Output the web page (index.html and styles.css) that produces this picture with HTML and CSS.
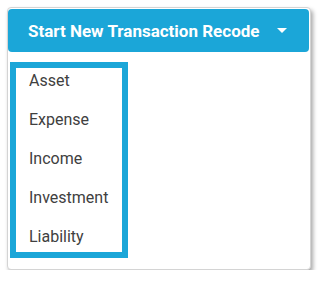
FILE: index.html
```html
<!DOCTYPE html>
<html lang="en">
<head>
    <meta charset="UTF-8">
    <title>Transaction Recode</title>
    <link rel="stylesheet" href="styles.css">
</head>
<body>
    <div class="dropdown-card">
        <button class="dropdown-toggle" type="button">
            Start New Transaction Recode
            <span class="caret"></span>
        </button>
        <ul class="dropdown-menu">
            <li>Asset</li>
            <li>Expense</li>
            <li>Income</li>
            <li>Investment</li>
            <li>Liability</li>
        </ul>
        <!-- highlight box drawn over the menu -->
        <div class="highlight"></div>
    </div>
</body>
</html>
```

FILE: styles.css
```css
:root {
    --brand-blue: #1ba6d8;
    --text-color: #404040;
    --border-color: #d4d4d4;
}

body {
    margin: 0;
    background-color: white;
    font-family: Roboto, 'Liberation Sans', sans-serif;
}

.dropdown-card {
    position: relative;
    box-sizing: border-box;
    width: 304px;
    height: 263px;
    margin: 7px 0 0 7px;
    padding-top: 1px;
    background-color: white;
    border: 1px solid var(--border-color);
    border-radius: 4px;
    box-shadow: 2px 3px 4px rgba(0, 0, 0, 0.35);
}

.dropdown-toggle {
    display: flex;
    align-items: center;
    box-sizing: border-box;
    width: 301px;
    height: 43px;
    margin: 0;
    padding: 0 0 0 20px;
    border: none;
    border-radius: 4px;
    background-color: var(--brand-blue);
    color: white;
    font-family: Roboto, 'Liberation Sans', sans-serif;
    font-size: 17px;
    font-weight: 700;
    cursor: pointer;
}

.caret {
    width: 0;
    height: 0;
    margin-left: 18px;
    border-left: 5px solid transparent;
    border-right: 5px solid transparent;
    border-top: 5px solid white;
}

.dropdown-menu {
    list-style: none;
    margin: 9px 0 0;
    padding: 0;
}

.dropdown-menu li {
    padding-left: 21px;
    line-height: 39px;
    font-size: 16px;
    color: var(--text-color);
}

.highlight {
    position: absolute;
    left: 2px;
    top: 54px;
    box-sizing: border-box;
    width: 118px;
    height: 196px;
    border: 6px solid var(--brand-blue);
}
```
